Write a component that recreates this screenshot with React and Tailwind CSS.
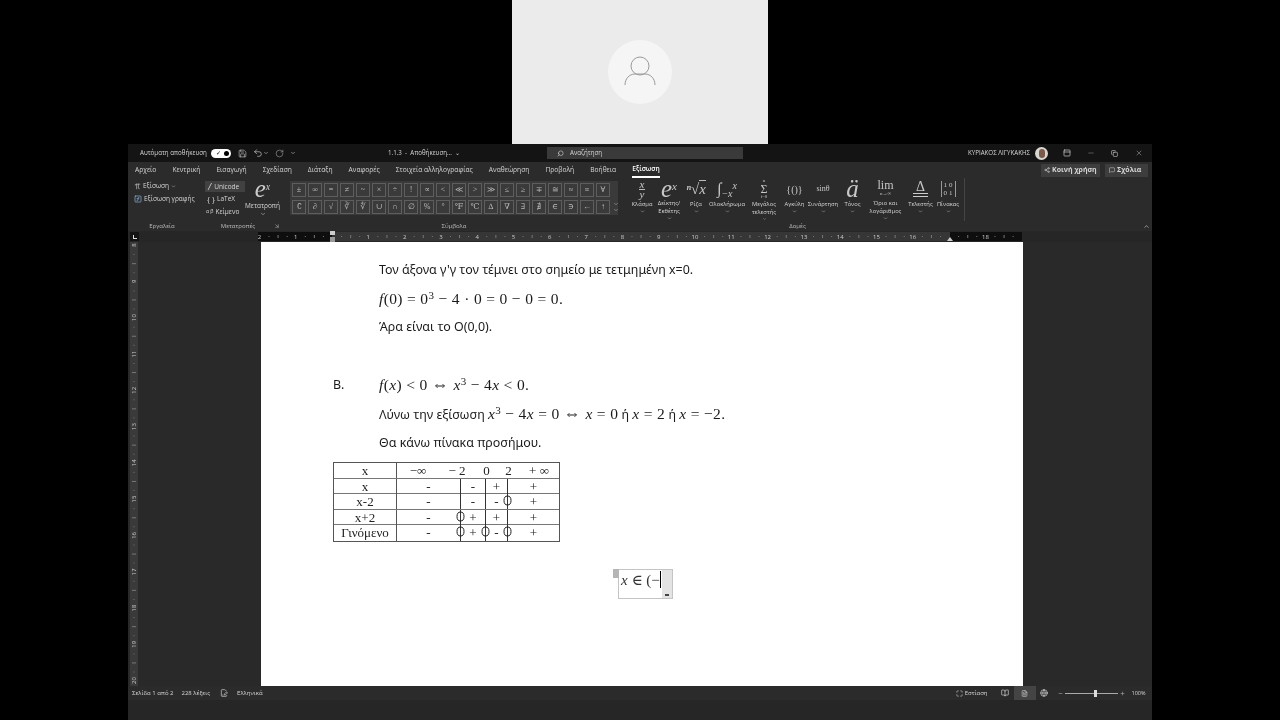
import { Save, Undo2, RotateCw, ChevronDown, Search, Minus, X, Copy, MessageSquare, Share2, ChevronUp, PanelTop, Maximize, BookOpen, FileText, Globe, Plus, Pi, SquareFunction, ArrowDownRight, FilePenLine } from 'lucide-react';

const ui = "font-['Open_Sans','Noto_Sans',sans-serif]";
const serif = "font-['Liberation_Serif',serif]";
const mathFont = "font-['Liberation_Serif','DejaVu_Serif',serif]";

const tabs = ['Αρχείο', 'Κεντρική', 'Εισαγωγή', 'Σχεδίαση', 'Διάταξη', 'Αναφορές', 'Στοιχεία αλληλογραφίας', 'Αναθεώρηση', 'Προβολή', 'Βοήθεια'];

const symbolsTop = ['±', '∞', '=', '≠', '~', '×', '÷', '!', '∝', '<', '≪', '>', '≫', '≤', '≥', '∓', '≅', '≈', '≡', '∀'];
const symbolsBottom = ['∁', '∂', '√', '∛', '∜', '∪', '∩', '∅', '%', '°', '℉', '℃', '∆', '∇', '∃', '∄', '∈', '∋', '←', '↑'];

const structures = [
  { w: 'w-[24px]', label: ['Κλάσμα'], icon: <span className="flex flex-col items-center text-[11px] leading-[9px] italic"><span className="border-b border-[#bbb] px-[1px]">x</span><span>y</span></span> },
  { w: 'w-[30px]', label: ['Δείκτης/', 'Εκθέτης'], icon: <span className="text-[25px] leading-[20px] italic">e<sup className="text-[11px] relative -top-[7px]">x</sup></span> },
  { w: 'w-[24px]', label: ['Ρίζα'], icon: <span className="text-[15px] leading-[20px] italic">ⁿ√<span className="border-t border-[#bbb]">x</span></span> },
  { w: 'w-[38px]', label: ['Ολοκλήρωμα'], icon: <span className="text-[16px] leading-[20px] italic">∫<sub className="text-[10px]">−x</sub><sup className="text-[10px]">x</sup></span> },
  { w: 'w-[36px]', label: ['Μεγάλος', 'τελεστής'], icon: <span className="flex flex-col items-center text-[5px] leading-[6px]"><span>n</span><span className="text-[12px] leading-[10px]">Σ</span><span>i=0</span></span> },
  { w: 'w-[25px]', label: ['Αγκύλη'], icon: <span className="text-[10px]">{'{()}'}</span> },
  { w: 'w-[32px]', label: ['Συνάρτηση'], icon: <span className="text-[8px]">sinθ</span> },
  { w: 'w-[27px]', label: ['Τόνος'], icon: <span className="text-[25px] leading-[20px] italic">ä</span> },
  { w: 'w-[39px]', label: ['Όριο και', 'λογάριθμος'], icon: <span className="flex flex-col items-center text-[12px] leading-[9px]"><span>lim</span><span className="text-[5px] leading-[7px]">n→∞</span></span> },
  { w: 'w-[31px]', label: ['Τελεστής'], icon: <span className="flex flex-col items-center text-[14px] leading-[12px]"><span>Δ</span><span className="w-[15px] h-[4px] border-y border-[#ccc]"></span></span> },
  { w: 'w-[24px]', label: ['Πίνακας'], icon: <span className="border-x border-[#999] px-[2px] grid grid-cols-2 gap-x-[2px] text-[7px] leading-[8px]"><span>1</span><span>0</span><span>0</span><span>1</span></span> },
];

const signRows = [
  { label: 'x', cells: ['-', '-', '+', '+'] },
  { label: 'x-2', cells: ['-', '-', '-', '+'], zeros: [2] },
  { label: 'x+2', cells: ['-', '+', '+', '+'], zeros: [0] },
  { label: 'Γινόμενο', cells: ['-', '+', '-', '+'], zeros: [0, 1, 2], last: true },
];

function Zero({ className }) {
  return (
    <svg className={`absolute top-[1px] w-[9px] h-[11px] ${className}`} viewBox="0 0 9 11" fill="none" stroke="#222" strokeWidth="1">
      <ellipse cx="4.5" cy="5.5" rx="3.5" ry="4.5" />
    </svg>
  );
}

function SignRow({ row }) {
  const zeros = row.zeros || [];
  return (
    <div className={`grid grid-cols-[63px_63px_25px_22px_1fr] h-[15.5px] items-center ${row.last ? '' : 'border-b border-[#777]'}`}>
      <div className="h-full border-r border-[#555] text-center leading-[15px]">{row.label}</div>
      <div className="relative h-full text-center leading-[15px]">
        {row.cells[0]}
      </div>
      <div className="relative h-full border-l border-[#333] text-center leading-[15px]">
        {zeros.includes(0) && <Zero className="-left-[5px]" />}
        {row.cells[1]}
      </div>
      <div className="relative h-full border-l border-[#333] text-center leading-[15px]">
        {zeros.includes(1) && <Zero className="-left-[5px]" />}
        {row.cells[2]}
      </div>
      <div className="relative h-full border-l border-[#333] text-center leading-[15px]">
        {zeros.includes(2) && <Zero className="-left-[5px]" />}
        {row.cells[3]}
      </div>
    </div>
  );
}

function Line({ className = '', children }) {
  return <div className={`h-5 leading-5 whitespace-nowrap ${className}`}>{children}</div>;
}

function M({ children }) {
  return <span className={`${mathFont} text-[15.5px] tracking-[0.35px]`}>{children}</span>;
}

function I({ children }) {
  return <span className="italic">{children}</span>;
}

function Pow() {
  return <sup className="text-[11px]">3</sup>;
}

function Iff() {
  return <span className="text-[17px] leading-none">⇔</span>;
}

function HorizontalRuler() {
  const labels = [];
  for (let n = -2; n <= 18; n++) {
    if (n === 0 || n === 17) continue;
    labels.push(
      <text key={n} x={74 + n * 36.3} y="8" textAnchor="middle" fontSize="6" fill="#ccc">{Math.abs(n)}</text>
    );
  }
  const ticks = [];
  for (let i = -8; i < 76; i++) {
    if (i % 4 === 0) continue;
    const x = 74 + (i * 36.3) / 4;
    ticks.push(<rect key={i} x={x} y={i % 2 === 0 ? 4 : 5} width="1" height={i % 2 === 0 ? 3 : 1} fill="#777" />);
  }
  return (
    <svg width="764" height="11" viewBox="0 0 764 11" className="block font-['Open_Sans',sans-serif] overflow-hidden">
      <rect x="0" y="1" width="764" height="9" fill="#0e0e0e" />
      <rect x="74" y="1" width="618" height="9" fill="#363636" />
      {ticks}
      {labels}
      <rect x="72" y="0" width="5" height="4" fill="#ccc" />
      <rect x="72" y="6" width="5" height="5" fill="#999" />
      <path d="M689 10l3-4 3 4z" fill="#ccc" />
    </svg>
  );
}

function VerticalRuler() {
  const labels = [];
  for (let n = 8; n <= 20; n++) {
    const y = 3 + (n - 8) * 36.3;
    labels.push(<text key={`m${n}`} x="4" y={y + 2} textAnchor="middle" fontSize="6" fill="#ccc" transform={`rotate(-90 4 ${y})`}>{n}</text>);
    for (let k = 1; k < 4; k++) {
      labels.push(<rect key={`t${n}-${k}`} x={k === 2 ? 2 : 3.5} y={y + (k * 36.3) / 4} width={k === 2 ? 4 : 1} height="1" fill="#777" />);
    }
  }
  return (
    <svg width="8" height="444" viewBox="0 0 8 444" className="block font-['Open_Sans',sans-serif]">
      <rect width="8" height="444" fill="#3a3a3a" />
      {labels}
    </svg>
  );
}

export default function App() {
  return (
    <div className={`w-[1280px] h-[720px] bg-black overflow-hidden ${ui}`}>
      {/* webcam tile */}
      <div className="w-[256px] h-[144px] mx-auto bg-[#ebebeb] flex items-center justify-center">
        <div className="w-[64px] h-[64px] rounded-full bg-[#f5f5f5] flex items-center justify-center blur-[0.3px]">
          <svg width="34" height="34" viewBox="0 0 34 34" fill="none" stroke="#9a9a9a" strokeWidth="1">
            <circle cx="17" cy="11" r="9" />
            <path d="M2 30c0-6 4-11 10-11h10c6 0 10 5 10 11" />
          </svg>
        </div>
      </div>

      {/* word window */}
      <div className="w-[1024px] h-[576px] mx-auto flex flex-col bg-[#262626] text-[#d6d6d6] blur-[0.35px]">
        {/* title bar */}
        <div className="h-[18px] shrink-0 bg-[#141414] flex items-center text-[6.2px] relative">
          <span className="ml-[12px] w-[71px] whitespace-nowrap">Αυτόματη αποθήκευση</span>
          <div className="w-[20px] h-[9px] rounded-full bg-white flex items-center justify-end pr-[2px] relative">
            <span className="absolute left-[5px] text-black text-[6px] leading-none">✓</span>
            <span className="w-[5px] h-[5px] rounded-full bg-black"></span>
          </div>
          <Save className="ml-[7px] w-[9px] h-[9px]" strokeWidth={1.5} />
          <Undo2 className="ml-[6px] w-[10px] h-[10px]" strokeWidth={1.5} />
          <ChevronDown className="w-[6px] h-[6px]" />
          <RotateCw className="ml-[6px] w-[9px] h-[9px] text-[#aaa]" strokeWidth={1.5} />
          <ChevronDown className="ml-[6px] w-[6px] h-[6px]" />
          <span className="ml-[92px] w-[159px] whitespace-nowrap">1.1.3 &nbsp;-&nbsp; Αποθήκευση... &nbsp;⌄</span>
          <div className="w-[196px] h-[12px] bg-[#3a3a3a] flex items-center pl-[10px] gap-[6px]">
            <Search className="w-[7px] h-[7px] -scale-x-100" />
            <span>Αναζήτηση</span>
          </div>
          <span className="ml-auto whitespace-nowrap">ΚΥΡΙΑΚΟΣ ΛΙΓΥΚΑΚΗΣ</span>
          <div className="ml-[5px] w-[13px] h-[13px] rounded-full bg-[#d9d5cf] overflow-hidden flex items-center justify-center">
            <div className="w-[6px] h-[9px] rounded-full bg-[#7a5a4a]"></div>
          </div>
          <PanelTop className="ml-[15px] w-[8px] h-[8px]" />
          <Minus className="ml-[16px] w-[8px] h-[8px]" strokeWidth={1} />
          <Copy className="ml-[16px] w-[7px] h-[7px]" />
          <X className="ml-[17px] mr-[9px] w-[8px] h-[8px]" strokeWidth={1.25} />
        </div>

        {/* tabs */}
        <div className="h-[16px] shrink-0 bg-[#2b2b2b] flex items-center pl-[7px] gap-[16px] text-[6.7px] whitespace-nowrap">
          {tabs.map((t) => <span key={t}>{t}</span>)}
          <span className="h-full flex items-center border-b-2 border-white font-semibold text-white">Εξίσωση</span>
          <div className="ml-auto mr-[4px] flex items-center gap-[5px] font-bold text-[7px]">
            <div className="h-[13px] px-[3px] w-[59px] bg-[#3d3d3d] flex items-center gap-[2px]">
              <Share2 className="w-[6px] h-[6px]" />Κοινή χρήση
            </div>
            <div className="h-[13px] px-[4px] w-[43px] bg-[#3d3d3d] flex items-center gap-[2px]">
              <MessageSquare className="w-[6px] h-[6px]" />Σχόλια
            </div>
          </div>
        </div>

        {/* ribbon */}
        <div className="h-[53px] shrink-0 bg-[#2b2b2b] flex text-[6.5px] relative whitespace-nowrap">
          <div className="w-[68px] flex flex-col">
            <div className="h-[43px] pl-[6px] pt-[3px] flex flex-col gap-[3px]">
              <div className="flex items-center gap-[2px] h-[10px]"><Pi className="w-[7px] h-[7px]" />Εξίσωση<ChevronDown className="w-[5px] h-[5px]" /></div>
              <div className="flex items-center gap-[2px] h-[10px]"><SquareFunction className="w-[8px] h-[8px] text-[#8fb5e0]" />Εξίσωση γραφής</div>
            </div>
            <div className="text-center text-[6px] text-[#bbb] leading-[10px]">Εργαλεία</div>
          </div>
          <div className="w-[84px] flex flex-col">
            <div className="h-[43px] flex">
              <div className="w-[40px] ml-[9px] flex flex-col">
                <div className="h-[11px] mt-[3px] bg-[#414141] flex items-center pl-[3px] gap-[3px]"><span className="italic text-[9px] leading-none">/</span>Unicode</div>
                <div className="h-[13px] flex items-center pl-[2px] gap-[2px]"><span className="text-[8px] leading-none">{'{ }'}</span>LaTeX</div>
                <div className="h-[13px] flex items-center pl-[1px] gap-[2px]"><span className="text-[5px] leading-none">α β</span>Κείμενο</div>
              </div>
              <div className="w-[35px] flex flex-col items-center">
                <span className={`${serif} text-[25px] leading-[22px] italic text-[#ccc]`}>e<sup className="text-[10px] relative -top-[7px]">x</sup></span>
                <span className="mt-[1px] leading-[9px]">Μετατροπή</span>
                <ChevronDown className="mt-[1px] w-[6px] h-[6px]" />
              </div>
            </div>
            <div className="relative text-center text-[6px] text-[#bbb] leading-[10px]">
              Μετατροπές
              <ArrowDownRight className="absolute right-0 top-[2px] w-[6px] h-[6px]" />
            </div>
          </div>
          <div className="w-[350px] pl-[10px] flex flex-col">
            <div className="h-[43px] pt-[3px]">
              <div className="w-[328px] h-[34px] bg-[#3a3a3a] pl-[2px] pt-[2px] flex">
                <div className="grid grid-cols-[repeat(20,16px)] gap-y-[2px] text-[8px] text-[#bdbdbd]">
                  {symbolsTop.concat(symbolsBottom).map((s, i) => (
                    <span key={i} className={`${mathFont} w-[14px] h-[14px] border border-[#5e5e5e] flex items-center justify-center leading-none`}>{s}</span>
                  ))}
                </div>
                <div className="ml-[1px] flex flex-col items-center justify-end h-[30px] text-[#bbb]">
                  <ChevronDown className="w-[6px] h-[6px]" />
                  <ChevronDown className="w-[6px] h-[6px]" />
                </div>
              </div>
            </div>
            <div className="w-[328px] text-center text-[6px] text-[#bbb] leading-[10px]">Σύμβολα</div>
          </div>
          <div className="flex flex-col">
            <div className="h-[43px] flex border-r border-[#444] pr-[4px]">
              {structures.map((s) => (
                <div key={s.label[0]} className={`${s.w} flex flex-col items-center text-[5.8px]`}>
                  <div className={`${serif} h-[22px] flex items-center justify-center text-[#c8c8c8]`}>{s.icon}</div>
                  <div className="leading-[8px] text-center">
                    {s.label.map((l) => <div key={l}>{l}</div>)}
                  </div>
                  <ChevronDown className="w-[5px] h-[5px] mt-[1px]" />
                </div>
              ))}
            </div>
            <div className="text-center text-[6px] text-[#bbb] leading-[10px]">Δομές</div>
          </div>
          <ChevronUp className="absolute right-[2px] bottom-[1px] w-[7px] h-[7px]" />
        </div>

        {/* ruler row */}
        <div className="h-[11px] shrink-0 bg-[#262626] flex">
          <div className="w-[130px] pl-[2px] pt-[1px]">
            <div className="w-[9px] h-[9px] bg-[#141414] flex items-end justify-center pb-[2px]">
              <div className="w-[4px] h-[4px] border-l border-b border-[#ddd]"></div>
            </div>
          </div>
          <HorizontalRuler />
        </div>

        {/* document area */}
        <div className="h-[444px] shrink-0 flex overflow-hidden bg-[#292929]">
          <div className="w-[133px] pl-[2px] shrink-0">
            <VerticalRuler />
          </div>
          <div className="w-[762px] h-[444px] bg-white text-[#1a1a1a] pt-[18px] pl-[72px] shrink-0 font-['Noto_Sans',sans-serif] text-[12.45px] overflow-hidden">
            <Line className="pl-[46px]">Τον άξονα γ'γ τον τέμνει στο σημείο με τετμημένη x=0.</Line>
            <Line className="pl-[46px] mt-[9px]"><M><I>f</I>(0) = 0<Pow /> − 4 · 0 = 0 − 0 = 0.</M></Line>
            <Line className="pl-[46px] mt-[8px]">Άρα είναι το Ο(0,0).</Line>
            <Line className="mt-[38px] flex">
              <span className="w-[46px]">Β.</span>
              <M><I>f</I>(<I>x</I>) &lt; 0 <Iff /> <I>x</I><Pow /> − 4<I>x</I> &lt; 0.</M>
            </Line>
            <Line className="pl-[46px] mt-[9px]">Λύνω την εξίσωση <M><I>x</I><Pow /> − 4<I>x</I> = 0 <Iff /> <I>x</I> = 0</M> ή <M><I>x</I> = 2</M> ή <M><I>x</I> = −2.</M></Line>
            <Line className="pl-[46px] mt-[9px]">Θα κάνω πίνακα προσήμου.</Line>

            {/* sign table */}
            <div className={`${serif} w-[227px] mt-[9px] border border-[#555] text-[13px] text-[#222]`}>
              <div className="grid grid-cols-[63px_42px_36px_23px_21px_1fr] h-[15.5px] border-b border-[#777] items-center text-center leading-[15px]">
                <div className="h-full border-r border-[#555]">x</div>
                <div>−∞</div>
                <div>− 2</div>
                <div>0</div>
                <div>2</div>
                <div>+ ∞</div>
              </div>
              {signRows.map((row) => <SignRow key={row.label} row={row} />)}
            </div>

            {/* equation being typed */}
            <div className="ml-[285px] mt-[27px] w-[55px] h-[30px] border border-[#c4c4c4] flex relative">
              <div className="absolute -left-[6px] -top-px w-[6px] h-[9px] bg-[#b5b5b5]"></div>
              <div className={`${mathFont} flex-1 pl-[2px] pt-[1px] text-[15px] leading-[18px] text-[#333] flex items-start`}>
                <I>x</I>&nbsp;∈&nbsp;(−<span className="w-px h-[17px] bg-black"></span>
              </div>
              <div className="w-[10px] bg-[#e3e3e3] flex items-end justify-center pb-[2px]">
                <span className="w-[4px] h-[2px] bg-[#444]"></span>
              </div>
            </div>
          </div>
          <div className="flex-1"></div>
        </div>

        {/* status bar */}
        <div className="h-[14px] shrink-0 bg-[#2b2b2b] flex items-center text-[6px] pl-[4px] whitespace-nowrap">
          <span>Σελίδα 1 από 2</span>
          <span className="ml-[8px]">228 λέξεις</span>
          <FilePenLine className="ml-[10px] w-[8px] h-[8px]" />
          <span className="ml-[9px]">Ελληνικά</span>
          <Maximize className="ml-[693px] w-[7px] h-[7px]" />
          <span className="ml-[2px]">Εστίαση</span>
          <BookOpen className="ml-[13px] w-[8px] h-[8px]" />
          <div className="ml-[5px] w-[22px] h-[14px] bg-[#444] flex items-center justify-center"><FileText className="w-[7px] h-[7px]" /></div>
          <Globe className="ml-[4px] w-[8px] h-[8px]" />
          <Minus className="ml-[10px] w-[5px] h-[5px]" />
          <div className="ml-[2px] w-[53px] h-px bg-[#aaa] relative">
            <div className="absolute left-[29px] -top-[3px] w-[3px] h-[7px] bg-[#ddd]"></div>
          </div>
          <Plus className="ml-[2px] w-[5px] h-[5px]" />
          <span className="ml-[7px] text-[5.5px]">100%</span>
        </div>

        <div className="flex-1 bg-[#262626]"></div>
      </div>
    </div>
  );
}
